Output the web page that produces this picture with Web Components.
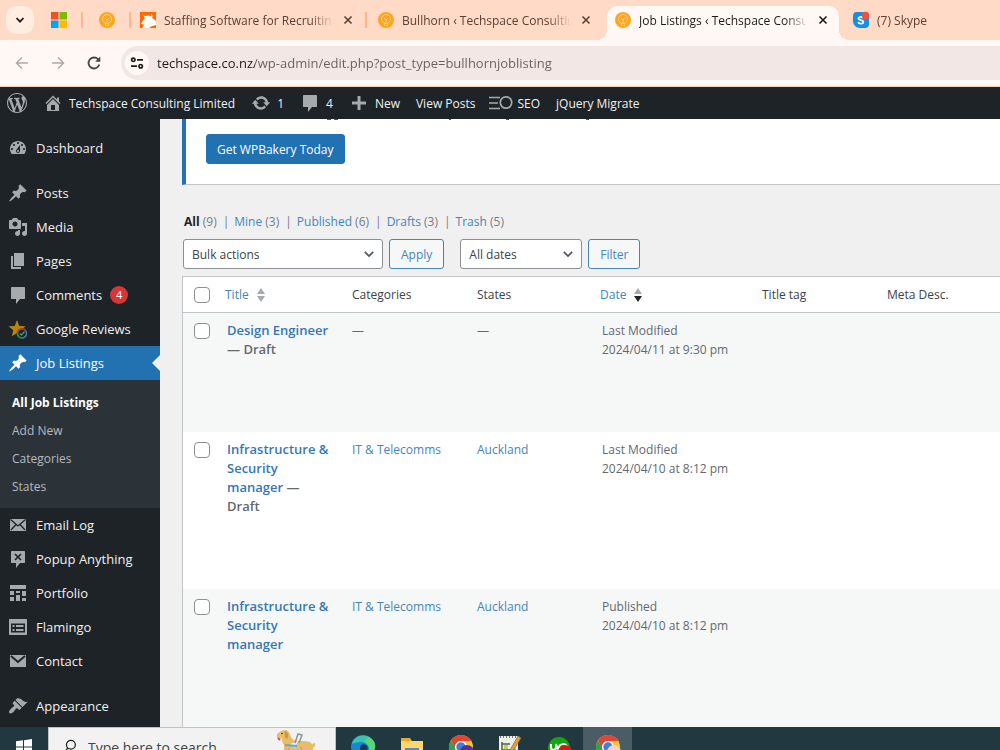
<!DOCTYPE html>
<html lang="en">
<head>
<meta charset="utf-8">
<title>Job Listings ‹ Techspace Consulting Limited</title>
<style>
    * { box-sizing: border-box; }
    body {
        margin: 0;
        height: 100vh;
        display: flex;
        flex-direction: column;
        overflow: hidden;
        background: #f0f0f1;
        font: 12px/19px "Open Sans", "Noto Sans", sans-serif;
        color: #50575e;
    }
    main { flex: 1; display: flex; min-height: 0; }
</style>
</head>
<body>
<tab-strip>
    <pinned-tab icon="microsoft"></pinned-tab>
    <pinned-tab icon="bulb"></pinned-tab>
    <browser-tab icon="bullhorn">Staffing Software for Recruiting Agencies</browser-tab>
    <browser-tab icon="bulb">Bullhorn ‹ Techspace Consulting Limited</browser-tab>
    <browser-tab icon="bulb" active>Job Listings ‹ Techspace Consulting Limited</browser-tab>
    <browser-tab icon="skype" last>(7) Skype</browser-tab>
</tab-strip>
<address-bar url="techspace.co.nz/wp-admin/edit.php?post_type=bullhornjoblisting"></address-bar>
<admin-bar>
    <admin-bar-item icon="wordpress" label="About WordPress"></admin-bar-item>
    <admin-bar-item icon="home">Techspace Consulting Limited</admin-bar-item>
    <admin-bar-item icon="update">1</admin-bar-item>
    <admin-bar-item icon="comment">4</admin-bar-item>
    <admin-bar-item icon="plus">New</admin-bar-item>
    <admin-bar-item>View Posts</admin-bar-item>
    <admin-bar-item icon="seo">SEO</admin-bar-item>
    <admin-bar-item>jQuery Migrate</admin-bar-item>
</admin-bar>
<main>
    <admin-menu>
        <menu-item icon="dashboard">Dashboard</menu-item>
        <menu-item icon="pin" separated>Posts</menu-item>
        <menu-item icon="media">Media</menu-item>
        <menu-item icon="page">Pages</menu-item>
        <menu-item icon="comment" count="4">Comments</menu-item>
        <menu-item icon="reviews">Google Reviews</menu-item>
        <menu-item icon="pin" current>Job Listings</menu-item>
        <sub-menu items="All Job Listings,Add New,Categories,States"></sub-menu>
        <menu-item icon="email">Email Log</menu-item>
        <menu-item icon="popup">Popup Anything</menu-item>
        <menu-item icon="portfolio">Portfolio</menu-item>
        <menu-item icon="flamingo">Flamingo</menu-item>
        <menu-item icon="contact">Contact</menu-item>
        <menu-item icon="brush" separated>Appearance</menu-item>
    </admin-menu>
    <admin-content>
        <admin-notice slot="notice">Get WPBakery Today</admin-notice>
        <status-links slot="filters"></status-links>
        <table-nav slot="filters"></table-nav>
        <job-table></job-table>
    </admin-content>
</main>
<task-bar></task-bar>

<script>
const ICONS = {
    wordpress: ["0 0 20 20", `<path d="M20 10c0-5.51-4.49-10-10-10C4.48 0 0 4.49 0 10c0 5.52 4.48 10 10 10 5.51 0 10-4.48 10-10zM7.78 15.37L4.37 6.22c.55-.02 1.17-.08 1.17-.08.5-.06.44-1.13-.06-1.11 0 0-1.45.11-2.37.11-.18 0-.37 0-.58-.01C4.12 2.69 6.87 1.11 10 1.11c2.33 0 4.45.87 6.05 2.34-.68-.11-1.65.39-1.65 1.58 0 .74.45 1.36.9 2.1.35.61.55 1.36.55 2.46 0 1.49-1.4 5-1.4 5l-3.03-8.37c.54-.02.82-.17.82-.17.5-.05.44-1.25-.06-1.22 0 0-1.44.12-2.38.12-.87 0-2.33-.12-2.33-.12-.5-.03-.56 1.2-.06 1.22l.92.08 1.26 3.41zM17.41 10c.24-.64.74-1.87.43-4.25.7 1.29 1.05 2.71 1.05 4.25 0 3.29-1.73 6.24-4.4 7.78.97-2.59 1.94-5.2 2.92-7.78zM6.1 18.09C3.12 16.65 1.11 13.53 1.11 10c0-1.3.23-2.48.72-3.59C3.25 10.3 4.67 14.2 6.1 18.09zm4.03-6.63l2.58 6.98c-.86.29-1.76.45-2.71.45-.79 0-1.57-.11-2.29-.33.81-2.38 1.62-4.74 2.42-7.1z"/>`],
    home: ["0 0 20 20", `<path d="M16 8.5l1.53 1.53-1.06 1.06L10 4.6l-6.47 6.49-1.06-1.06L10 2.5l4 4v-2h2v4zm-6-2.46l6 5.99V18H4v-5.97zM12 17v-5H8v5h4z"/>`],
    update: ["0 0 20 20", `<path d="M10.2 3.28c3.53 0 6.43 2.61 6.92 6h2.08l-3.5 4-3.5-4h2.32c-.45-1.97-2.21-3.45-4.32-3.45-1.45 0-2.73.71-3.54 1.78L4.95 5.66C6.23 4.2 8.11 3.28 10.2 3.28zm-.4 13.44c-3.52 0-6.43-2.61-6.92-6H.8l3.5-4c1.17 1.33 2.33 2.67 3.5 4H5.48c.45 1.97 2.21 3.45 4.32 3.45 1.45 0 2.73-.71 3.54-1.78l1.71 1.95c-1.28 1.46-3.15 2.38-5.25 2.38z"/>`],
    comment: ["0 0 20 20", `<path d="M4 2h12c.6 0 1 .4 1 1v10c0 .6-.4 1-1 1h-4l-4 5v-5H4c-.6 0-1-.4-1-1V3c0-.6.4-1 1-1z"/>`],
    plus: ["0 0 20 20", `<path d="M17 8.500v3h-5.500v5.500h-3v-5.500H3v-3h5.500V3h3v5.500z"/>`],
    seo: ["3 0 20 20", `<path d="M1 4.500h11M1 10h9M1 15.500h11" fill="none" stroke="currentColor" stroke-width="1.700"/><circle cx="18" cy="9.500" r="5.700" fill="none" stroke="currentColor" stroke-width="1.700"/>`],
    dashboard: ["0 0 20 20", `<path d="M3.760 16h12.480c1.100-1.370 1.760-3.110 1.760-5 0-4.420-3.580-8-8-8s-8 3.580-8 8c0 1.890.660 3.630 1.760 5zM10 4c.55 0 1 .45 1 1s-.45 1-1 1-1-.45-1-1 .45-1 1-1zM6 6c.55 0 1 .45 1 1s-.45 1-1 1-1-.45-1-1 .45-1 1-1zm8 0c.55 0 1 .45 1 1s-.45 1-1 1-1-.45-1-1 .45-1 1-1zm-5.370 5.550L12 7v6c0 1.100-.9 2-2 2s-2-.9-2-2c0-.57.24-1.080.63-1.450zM4 10c.55 0 1 .45 1 1s-.45 1-1 1-1-.45-1-1 .45-1 1-1zm12 0c.55 0 1 .45 1 1s-.45 1-1 1-1-.45-1-1 .45-1 1-1zm-5 3c0-.55-.45-1-1-1s-1 .45-1 1 .45 1 1 1 1-.45 1-1z"/>`],
    pin: ["0 0 20 20", `<path d="M10.44 3.02l1.82-1.82 6.36 6.35-1.83 1.82c-1.05-.68-2.48-.57-3.41.36l-.75.75c-.92.93-1.04 2.35-.35 3.41l-1.83 1.82-2.41-2.41-2.8 2.79c-.42.42-3.38 2.71-3.8 2.29s1.86-3.39 2.28-3.81l2.79-2.79L4.1 9.36l1.83-1.82c1.05.69 2.48.57 3.4-.36l.75-.75c.93-.92 1.05-2.35.36-3.41z"/>`],
    media: ["0 0 20 20", `<path d="M13 11V4c0-.55-.45-1-1-1h-1.67L9 1H5L3.67 3H2c-.55 0-1 .45-1 1v7c0 .55.45 1 1 1h10c.55 0 1-.45 1-1zM7 4.500c1.380 0 2.500 1.120 2.500 2.500S8.380 9.500 7 9.500 4.500 8.380 4.500 7 5.620 4.500 7 4.500zM14 6h5v10.500c0 1.380-1.120 2.500-2.500 2.500S14 17.880 14 16.500s1.120-2.500 2.500-2.500c.17 0 .34.02.5.05V9h-3V6zm-4 8.050V13h2v3.500c0 1.380-1.120 2.500-2.500 2.500S7 17.880 7 16.500 8.120 14 9.500 14c.17 0 .34.02.5.05z"/>`],
    page: ["0 0 20 20", `<path d="M6 15V2h10v13H6zm-1 1h8v2H3V5h2v11z"/>`],
    reviews: ["0 0 20 20", `<path d="M9 1l2.300 5.900 6.200.4-4.800 3.900 1.600 6.100L9 13.900l-5.300 3.400 1.600-6.100L.5 7.300l6.200-.4z" fill="#b8860b"/><circle cx="14" cy="14.500" r="5.300" fill="#1d2327"/><g fill="none" stroke-width="1.500"><path d="M9.700 13a4.500 4.500 0 0 1 8-1.200" stroke="#c0392b"/><path d="M17.700 11.800A4.500 4.500 0 0 1 16 18.500" stroke="#3b78c9"/><path d="M16 18.500a4.500 4.500 0 0 1-6.300-5.500" stroke="#2e8b57"/><path d="M12 14.500l1.500 1.500 3-3.500" stroke="#3b9c5a"/></g>`],
    email: ["0 0 20 20", `<path d="M2 4h16v12H2z"/><path d="M2.500 4.500L10 11l7.500-6.500M3 15l5-5.500M17 15l-5-5.500" fill="none" stroke="#1d2327" stroke-width="1.300"/>`],
    popup: ["0 0 20 20", `<path d="M4 2h12c.6 0 1 .4 1 1v10c0 .6-.4 1-1 1h-4l-4 5v-5H4c-.6 0-1-.4-1-1V3c0-.6.4-1 1-1z"/><path d="M7 5l6 6M13 5l-6 6" fill="none" stroke="#1d2327" stroke-width="1.700"/>`],
    portfolio: ["0 0 20 20", `<path d="M2 2h16v4H2zM2 8h4v4H2zM8 8h4v2H8zM14 8h4v5h-4zM2 14h4v4H2zM8 12h4v6H8zM14 15h4v3h-4z"/>`],
    flamingo: ["0 0 20 20", `<path d="M1 3c0-.6.4-1 1-1h16c.6 0 1 .4 1 1v14c0 .6-.4 1-1 1H2c-.6 0-1-.4-1-1z"/><path d="M3 6.500h14v9H3z" fill="#1d2327"/><path d="M4.500 8h2v2h-2zM8 8h7.500v2H8zM4.500 12h2v2h-2zM8 12h7.500v2H8z"/>`],
    contact: ["0 0 20 20", `<path d="M2 4h16v12H2z"/><path d="M3 5l7 6 7-6" fill="none" stroke="#1d2327" stroke-width="2"/>`],
    brush: ["0 0 20 20", `<path d="M14.48 11.06L7.41 3.99l1.5-1.5c.5-.56 2.3-.47 3.51.32 1.21.8 1.43 1.28 2.91 2.1 1.18.64 2.45 1.26 4.45.85zm-.71.71L6.7 4.7 4.93 6.47c-.39.39-.39 1.02 0 1.41l1.06 1.06c.39.39.39 1.03 0 1.42-.6.6-1.43 1.11-2.21 1.69-.35.26-.7.53-1.01.84C1.43 14.23.4 16.08 1.4 17.07c.99 1 2.84-.03 4.18-1.36.31-.31.58-.66.85-1.02.57-.78 1.08-1.61 1.69-2.21.39-.39 1.02-.39 1.41 0l1.06 1.06c.39.39 1.02.39 1.41 0z"/>`],
    microsoft: ["0 0 16 16", `<path fill="#f25022" d="M0 0h7.500v7.500H0z"/><path fill="#7fba00" d="M8.500 0H16v7.500H8.500z"/><path fill="#00a4ef" d="M0 8.500h7.500V16H0z"/><path fill="#ffb900" d="M8.500 8.500H16V16H8.500z"/>`],
    bulb: ["0 0 16 16", `<circle cx="8" cy="8" r="8" fill="#ffa51f"/><g fill="none" stroke="#ffd999" stroke-width=".8"><circle cx="8" cy="7" r="4.500"/><path d="M6.500 11v2.500h3V11M8 7v4M6 6l2 2 2-2"/></g>`],
    bullhorn: ["0 0 16 16", `<path fill="#ff6a00" d="M0 0h16v16H0z"/><path fill="#fff" d="M3.500 2.500c.5 1 1.500 1.500 3 1.500C8 3.200 10 3.500 11 4.500c.5-.8.6-1.800.3-2.700C13 3 13 5 12 6.200c2 .5 3.300 2 4 3.300V13l-4.500 1.200L9 16H2.500c.3-1.500 1-2.700 2-3.500-1.300.3-2.700 0-3.500-1L3.500 8 5 5.800C3.700 5 3.200 3.800 3.500 2.500z"/>`],
    skype: ["0 0 16 16", `<path d="M0 4a4 4 0 0 1 4-4h5c4 0 7 3 7 7v5a4 4 0 0 1-4 4H7c-4 0-7-3-7-7z" fill="#1391e0"/><path d="M10 6C9 4.500 5.300 4.600 5.500 6.600c.2 2 4.900 1 4.900 3.300 0 2.200-4.200 2.300-5.300.4" fill="none" stroke="#fff" stroke-width="1.700"/><circle cx="12.500" cy="3.500" r="3.700" fill="#fb4a3c"/>`],
    close: ["0 0 10 10", `<path d="M1.500 1.500l7 7M8.500 1.500l-7 7" fill="none" stroke="currentColor" stroke-width="1.600"/>`],
    chevron: ["0 0 10 10", `<path d="M1.500 3L5 6.700 8.500 3" fill="none" stroke="currentColor" stroke-width="1.800"/>`],
    back: ["0 0 14 14", `<path d="M13 7H2M7 1.500L1.500 7 7 12.500" fill="none" stroke="currentColor" stroke-width="1.500"/>`],
    forward: ["0 0 14 14", `<path d="M1 7h11M7 1.500L12.500 7 7 12.500" fill="none" stroke="currentColor" stroke-width="1.500"/>`],
    reload: ["0 0 14 14", `<path d="M12.300 8.500A5.500 5.500 0 1 1 11 3.200l1.500 1.600" fill="none" stroke="currentColor" stroke-width="1.800"/><path d="M13.300.5v5.200H8.200z"/>`],
    tune: ["0 0 14 14", `<g fill="none" stroke="currentColor" stroke-width="1.700"><circle cx="3.300" cy="3.800" r="1.700"/><path d="M7 3.800h6M1 10.200h6"/><circle cx="10.700" cy="10.200" r="1.700"/></g>`],
    search: ["0 0 16 18", `<circle cx="9" cy="6.500" r="5" fill="none" stroke="currentColor" stroke-width="1.400"/><path d="M5.500 10L1.500 15.500" stroke="currentColor" stroke-width="1.400"/>`],
    windows: ["0 0 16 16", `<path d="M0 2.300L7 1.300V7.500H0zM8 1.200L16 0v7.500H8zM0 8.500h7v6.200l-7-1zM8 8.500h8V16l-8-1.200z"/>`],
    dog: ["0 0 42 24", `<path fill="#e9bd68" d="M2 5c2-1 4-4 8-4 4 .3 5 4 6 7 2 4 7 4 12 4 5 0 8 1 9 3l3-1c1 2 0 4-2 5v5H9v-8c-2-2-2-5-2-7-2 1-4 1-5 0z"/><path d="M26 18v6M14 19v5" stroke="#cc964a"/><path d="M10 2c3 0 4 6 2 8-2-1-3-4-2-8z" fill="#cc964a"/><circle cx="7" cy="4.500" r=".8" fill="#333"/><path d="M3 9l2 2" stroke="#d9534f" stroke-width="2"/><path d="M15 15l8-3-3 7z" fill="#e8f0f5"/><path d="M10 16l12 1" stroke="#5aa9dd" stroke-width="2"/><path d="M20 14l3-9 4 1-3 8" fill="none" stroke="#8c939e" stroke-width="1.500"/>`],
    edge: ["0 0 24 24", `<circle cx="12" cy="12" r="12" fill="#1687d4"/><path d="M1 9C3-2 21-3 24 10c1 5-3 8-7 7 3-5-1-10-7-10-4 0-7 1-9 2z" fill="#36c3b2"/><path d="M17 2c6 2 8 7 7 11-1 3-4 5-7 4 3-5-1-8-4-10z" fill="#5bd676"/><path d="M9 13c0-3 3-5 6-3 2 1 2 4 1 6l8 2c-4 7-15 4-15-5z" fill="#153c62"/>`],
    folder: ["0 0 24 24", `<path d="M1 3h9l2 3h11v15H1z" fill="#e8a92c"/><path d="M1 6h22v16H1z" fill="#ffd76b"/><path d="M5 13h14v9H5z" fill="#4593cc"/>`],
    chrome: ["0 0 24 24", `<circle cx="12" cy="12" r="12" fill="#f7c52d"/><path d="M2 5.500C7-2 18-1.500 22.500 6H12a6 6 0 0 0-5.500 8z" fill="#e34436"/><path d="M2 5.500A12 12 0 0 0 12 24l4-8H8z" fill="#2ca352"/><circle cx="12" cy="12" r="6" fill="#fff"/><circle cx="12" cy="12" r="4.700" fill="#3c7fe0"/>`],
    notes: ["0 0 24 24", `<path d="M1 1h19v22H1z" fill="#eef0e8"/><path d="M2 2h17" stroke="#777" stroke-width="2" stroke-dasharray="1 2"/><path d="M4 7v15M4 9h8M4 15h14" fill="none" stroke="#555b50" stroke-width="1.500"/><path d="M5 17h14v6H5zM6 10h4v4H6z" fill="#b9d83e"/><path d="M20 1l3 2-9 15-3 1 1-4z" fill="#dfa03b" stroke="#8a6a3e" stroke-width=".7"/>`],
    upwork: ["0 0 24 24", `<circle cx="12" cy="13" r="11" fill="#12a70b"/><path d="M4 9v3c0 4 5 4 5 0V9c1 5 4 8 6 8M12 16V13c0-5 8-5 8-1 0 3-5 4-7 1" fill="none" stroke="#fff" stroke-width="2"/>`]
};

class UiIcon extends HTMLElement {
    constructor() {
        super();
        this.attachShadow({ mode: "open" });
    }

    connectedCallback() {
        const [viewBox, shapes] = ICONS[this.getAttribute("name")];
        this.shadowRoot.innerHTML = `
            <style>
                :host { display: block; flex: none; width: var(--icon-size, 16px); height: var(--icon-size, 16px); }
                svg { display: block; width: 100%; height: 100%; overflow: visible; fill: currentColor; }
            </style>
            <svg viewBox="${viewBox}" aria-hidden="true">${shapes}</svg>
        `;
    }
}

class TabStrip extends HTMLElement {
    constructor() {
        super();
        this.attachShadow({ mode: "open" });
        this.shadowRoot.innerHTML = `
            <style>
                :host {
                    display: flex;
                    flex: none;
                    align-items: flex-end;
                    height: 40px;
                    background: #ffdac6;
                    overflow: hidden;
                }
                button {
                    flex: none;
                    width: 28px;
                    height: 28px;
                    margin: 0 1px 6px 6px;
                    padding: 9px;
                    border: 0;
                    border-radius: 10px;
                    background: #ffede2;
                    color: #1f1a18;
                    --icon-size: 10px;
                }
            </style>
            <button aria-label="Search tabs"><ui-icon name="chevron"></ui-icon></button>
            <slot></slot>
        `;
    }
}

class PinnedTab extends HTMLElement {
    constructor() {
        super();
        this.attachShadow({ mode: "open" });
    }

    connectedCallback() {
        this.shadowRoot.innerHTML = `
            <style>
                :host {
                    display: flex;
                    flex: none;
                    align-items: center;
                    justify-content: flex-end;
                    gap: 14px;
                    width: 48px;
                    height: 40px;
                }
                span { width: 2px; height: 16px; border-radius: 1px; background: #ffb68a; }
            </style>
            <ui-icon name="${this.getAttribute("icon")}"></ui-icon><span></span>
        `;
    }
}

class BrowserTab extends HTMLElement {
    constructor() {
        super();
        this.attachShadow({ mode: "open" });
    }

    connectedCallback() {
        const last = this.hasAttribute("last");
        this.shadowRoot.innerHTML = `
            <style>
                :host {
                    position: relative;
                    display: flex;
                    flex: none;
                    align-items: center;
                    gap: 8px;
                    box-sizing: border-box;
                    width: 238px;
                    height: 40px;
                    padding: 0 0 0 9px;
                    color: #5c4034;
                }
                :host([active]) {
                    width: 232px;
                    height: 34px;
                    padding: 0 0 6px 8px;
                    border-radius: 10px 10px 0 0;
                    background: #fff8f5;
                    color: #1f1a18;
                }
                :host([last]) { padding-left: 14px; }
                /* outward curves at the foot of the active tab */
                :host([active])::before, :host([active])::after {
                    content: "";
                    position: absolute;
                    bottom: 0;
                    width: 10px;
                    height: 10px;
                }
                :host([active])::before { left: -10px; background: radial-gradient(circle at 0 0, transparent 10px, #fff8f5 10px); }
                :host([active])::after { right: -10px; background: radial-gradient(circle at 100% 0, transparent 10px, #fff8f5 10px); }
                .title {
                    width: 167px;
                    overflow: hidden;
                    white-space: nowrap;
                    -webkit-mask-image: linear-gradient(to right, #000 146px, transparent 170px);
                    mask-image: linear-gradient(to right, #000 146px, transparent 170px);
                }
                button { margin-left: 4px; padding: 0; border: 0; background: none; color: inherit; --icon-size: 10px; }
                .divider { width: 2px; height: 16px; margin-left: 4px; background: #ffb68a; }
            </style>
            <ui-icon name="${this.getAttribute("icon")}"></ui-icon>
            <div class="title"><slot></slot></div>
            ${last ? "" : `<button aria-label="Close tab"><ui-icon name="close"></ui-icon></button>`}
            ${this.hasAttribute("active") || this.nextElementSibling?.hasAttribute("active") || last ? "" : `<span class="divider"></span>`}
        `;
    }
}

class AddressBar extends HTMLElement {
    constructor() {
        super();
        this.attachShadow({ mode: "open" });
        this.shadowRoot.innerHTML = `
            <style>
                :host {
                    display: flex;
                    flex: none;
                    align-items: center;
                    box-sizing: border-box;
                    height: 47px;
                    padding-left: 15px;
                    border-bottom: 1px solid #f3cdb5;
                    background: #fff8f5;
                    color: #51433c;
                    --icon-size: 14px;
                }
                button { padding: 0; border: 0; background: none; color: inherit; margin-right: 22px; }
                button:disabled { color: #b3a8a3; }
                button:nth-of-type(3) { margin-right: 20px; }
                form {
                    flex: 1;
                    display: flex;
                    align-items: center;
                    gap: 8px;
                    height: 34px;
                    padding-left: 4px;
                    border-radius: 17px 0 0 17px;
                    background: #f2e7e4;
                }
                form button {
                    width: 24px;
                    height: 24px;
                    padding: 5px;
                    margin: 0;
                    border-radius: 50%;
                    background: #fff8f5;
                    color: #1f1a18;
                }
                input {
                    flex: 1;
                    border: 0;
                    padding: 0;
                    outline: 0;
                    font: inherit;
                    font-size: 13px;
                    color: #6b5f5a;
                    background: linear-gradient(to right, #1f1a18 98px, #6b5f5a 98px);
                    -webkit-background-clip: text;
                    background-clip: text;
                    -webkit-text-fill-color: transparent;
                }
            </style>
            <button aria-label="Back" disabled><ui-icon name="back"></ui-icon></button>
            <button aria-label="Forward" disabled><ui-icon name="forward"></ui-icon></button>
            <button aria-label="Reload"><ui-icon name="reload"></ui-icon></button>
            <form>
                <button type="button" aria-label="Site information"><ui-icon name="tune"></ui-icon></button>
                <input aria-label="Address" spellcheck="false" value="${this.getAttribute("url")}">
            </form>
        `;
    }
}

class AdminBar extends HTMLElement {
    constructor() {
        super();
        this.attachShadow({ mode: "open" });
        this.shadowRoot.innerHTML = `
            <style>
                :host {
                    display: flex;
                    flex: none;
                    align-items: center;
                    gap: 16px;
                    height: 32px;
                    padding-left: 7px;
                    background: #1d2327;
                    color: #f0f0f1;
                }
            </style>
            <slot></slot>
        `;
    }
}

class AdminBarItem extends HTMLElement {
    constructor() {
        super();
        this.attachShadow({ mode: "open" });
        const icon = this.getAttribute("icon");
        const label = this.getAttribute("label");
        this.shadowRoot.innerHTML = `
            <style>
                :host { display: block; --icon-size: 20px; }
                a { display: flex; align-items: center; gap: 6px; color: inherit; text-decoration: none; white-space: nowrap; }
                ui-icon { color: #a7aaad; }
            </style>
            <a href="#" ${label ? `aria-label="${label}"` : ""}>${icon ? `<ui-icon name="${icon}"></ui-icon>` : ""}<slot></slot></a>
        `;
    }
}

class AdminMenu extends HTMLElement {
    constructor() {
        super();
        this.attachShadow({ mode: "open" });
        this.shadowRoot.innerHTML = `
            <style>
                :host {
                    display: block;
                    flex: none;
                    box-sizing: border-box;
                    width: 160px;
                    padding-top: 12px;
                    overflow: hidden;
                    background: #1d2327;
                    color: #f0f0f1;
                    font-size: 13px;
                }
            </style>
            <nav><slot></slot></nav>
        `;
    }
}

class MenuItem extends HTMLElement {
    constructor() {
        super();
        this.attachShadow({ mode: "open" });
        const count = this.getAttribute("count");
        this.shadowRoot.innerHTML = `
            <style>
                :host { display: block; --icon-size: 20px; }
                :host([separated]) { margin-top: 11px; }
                a {
                    position: relative;
                    display: flex;
                    align-items: center;
                    gap: 8px;
                    height: 34px;
                    padding-left: 8px;
                    color: inherit;
                    text-decoration: none;
                    white-space: nowrap;
                }
                ui-icon { color: #a7aaad; }
                :host([current]) a { background: #2271b1; color: #fff; }
                :host([current]) ui-icon { color: #fff; }
                :host([current]) a::after {
                    content: "";
                    position: absolute;
                    right: 0;
                    border: 8px solid transparent;
                    border-right-color: #f0f0f1;
                    border-left: 0;
                }
                .count {
                    width: 18px;
                    height: 18px;
                    border-radius: 9px;
                    background: #d63638;
                    color: #fff;
                    font-size: 11px;
                    line-height: 18px;
                    text-align: center;
                }
            </style>
            <a href="#"><ui-icon name="${this.getAttribute("icon")}"></ui-icon><slot></slot>${count ? `<span class="count">${count}</span>` : ""}</a>
        `;
    }
}

class SubMenu extends HTMLElement {
    constructor() {
        super();
        this.attachShadow({ mode: "open" });
        const items = this.getAttribute("items").split(",");
        this.shadowRoot.innerHTML = `
            <style>
                :host { display: block; padding: 9px 0 7px; background: #2c3338; font-size: 12px; }
                a { display: block; padding-left: 12px; line-height: 28px; color: #b4b9be; text-decoration: none; }
                a:first-of-type { color: #fff; font-weight: 700; }
            </style>
            ${items.map((item) => `<a href="#">${item}</a>`).join("")}
        `;
    }
}

class AdminContent extends HTMLElement {
    constructor() {
        super();
        this.attachShadow({ mode: "open" });
        this.shadowRoot.innerHTML = `
            <style>
                :host { display: block; flex: 1; min-width: 0; padding-left: 22px; overflow: hidden; }
                .filters { padding: 27px 0 7px 1px; display: flex; flex-direction: column; gap: 8px; }
            </style>
            <slot name="notice"></slot>
            <div class="filters"><slot name="filters"></slot></div>
            <slot></slot>
        `;
    }
}

class AdminNotice extends HTMLElement {
    constructor() {
        super();
        this.attachShadow({ mode: "open" });
        this.shadowRoot.innerHTML = `
            <style>
                :host {
                    display: block;
                    padding-bottom: 20px;
                    border-left: 4px solid #2271b1;
                    border-bottom: 1px solid #c3c4c7;
                    background: #fff;
                }
                /* tails of the paragraph that is scrolled under the admin bar */
                svg { display: block; height: 15px; fill: none; stroke: #50575e; }
                button {
                    height: 30px;
                    margin-left: 20px;
                    padding: 0 10px;
                    border: 1px solid #2271b1;
                    border-radius: 3px;
                    background: #2271b1;
                    color: #fff;
                    font: inherit;
                }
            </style>
            <svg width="420" height="15" aria-hidden="true"><path d="M141 0.500h4M148 0.500h4M263 0.500h2M320 0.500h3M400 0.500h3"/></svg>
            <button><slot></slot></button>
        `;
    }
}

class StatusLinks extends HTMLElement {
    constructor() {
        super();
        this.attachShadow({ mode: "open" });
        const links = [["Mine", 3], ["Published", 6], ["Drafts", 3], ["Trash", 5]];
        this.shadowRoot.innerHTML = `
            <style>
                :host { display: block; padding-left: 1px; color: #787c82; }
                ul { display: flex; gap: 6px; margin: 0; padding: 0; list-style: none; white-space: nowrap; }
                li + li::before { content: "|"; margin-right: 5px; }
                a { color: #4585be; text-decoration: none; }
                .current { color: #1d2327; font-weight: 700; }
            </style>
            <ul>
                <li><a class="current" href="#">All</a> (9)</li>
                ${links.map(([name, count]) => `<li><a href="#">${name}</a> (${count})</li>`).join("")}
            </ul>
        `;
    }
}

class TableNav extends HTMLElement {
    constructor() {
        super();
        this.attachShadow({ mode: "open" });
        this.shadowRoot.innerHTML = `
            <style>
                :host { display: flex; gap: 6px; }
                select, button { height: 30px; border-radius: 3px; font: inherit; }
                select {
                    width: 200px;
                    padding: 0 24px 0 8px;
                    appearance: none;
                    border: 1px solid #8c8f94;
                    color: #3c434a;
                    background: #fff url("data:image/svg+xml,%3Csvg xmlns='http://www.w3.org/2000/svg' viewBox='0 0 20 20'%3E%3Cpath d='M4 7l6 6 6-6' fill='none' stroke='%2350575e' stroke-width='2.500'/%3E%3C/svg%3E") no-repeat right 6px center / 14px;
                }
                .dates { width: 122px; margin-left: 10px; }
                button { padding: 0 11px; border: 1px solid #4585be; background: #f6f7f7; color: #4585be; }
            </style>
            <select aria-label="Select bulk action"><option>Bulk actions</option></select>
            <button>Apply</button>
            <select class="dates" aria-label="Filter by date"><option>All dates</option></select>
            <button>Filter</button>
        `;
    }
}

class SortArrows extends HTMLElement {
    constructor() {
        super();
        this.attachShadow({ mode: "open" });
        this.shadowRoot.innerHTML = `
            <style>
                :host { display: block; color: #a7aaad; }
                :host([descending]) .down { color: #1d2327; }
                svg { display: block; fill: currentColor; }
            </style>
            <svg width="8" height="14" viewBox="0 0 8 14" aria-hidden="true"><path d="M4 0l4 6H0z"/><path class="down" fill="currentColor" d="M0 8h8l-4 6z"/></svg>
        `;
    }
}

class JobTable extends HTMLElement {
    _rows = [
        { title: "Design Engineer", draft: true, status: "Last Modified", date: "2024/04/11 at 9:30 pm", size: "short" },
        { title: "Infrastructure &amp; Security manager", draft: true, category: "IT &amp; Telecomms", state: "Auckland", status: "Last Modified", date: "2024/04/10 at 8:12 pm" },
        { title: "Infrastructure &amp; Security manager", category: "IT &amp; Telecomms", state: "Auckland", status: "Published", date: "2024/04/10 at 8:12 pm" }
    ];

    constructor() {
        super();
        this.attachShadow({ mode: "open" });
        this._render();
    }

    _row(row, index) {
        const term = (name) => (name ? `<a href="#">${name}</a>` : "—");
        return `
            <tr class="${row.size || ""}">
                <td><input type="checkbox" aria-label="Select ${row.title} (${index + 1})"></td>
                <td class="name"><a href="#">${row.title}</a>${row.draft ? " — Draft" : ""}</td>
                <td>${term(row.category)}</td>
                <td>${term(row.state)}</td>
                <td>${row.status}<br>${row.date}</td>
                <td></td>
                <td></td>
            </tr>
        `;
    }

    _render() {
        this.shadowRoot.innerHTML = `
            <style>
                :host { display: block; border: 1px solid #c3c4c7; border-right: 0; background: #fff; color: #646970; }
                table { width: 100%; border-collapse: collapse; table-layout: fixed; }
                th { height: 35px; padding: 0 10px; border-bottom: 1px solid #c3c4c7; color: #3c434a; font-weight: 400; text-align: left; white-space: nowrap; }
                td { height: 139px; padding: 8px 10px 10px; vertical-align: top; }
                .short td { height: 101px; }
                tbody tr:nth-child(odd) { background: #f6f7f7; }
                th.sortable { padding-left: 8px; }
                th.sortable a { display: flex; align-items: center; gap: 8px; }
                a { color: #4585be; text-decoration: none; }
                .name { font-size: 13px; font-weight: 600; }
                .name a { color: #3577b5; }
                th:first-child, td:first-child { padding-left: 11px; padding-right: 0; }
                input {
                    display: block;
                    appearance: none;
                    width: 16px;
                    height: 16px;
                    margin: 2px 0;
                    border: 1px solid #8c8f94;
                    border-radius: 4px;
                    background: #fff;
                }
                .check { width: 34px; }
                .term { width: 125px; }
                .date { width: 160px; }
            </style>
            <table>
                <colgroup>
                    <col class="check"><col class="term"><col class="term"><col class="term"><col class="date"><col class="term"><col>
                </colgroup>
                <thead>
                    <tr>
                        <th><input type="checkbox" aria-label="Select all"></th>
                        <th class="sortable"><a href="#">Title <sort-arrows></sort-arrows></a></th>
                        <th>Categories</th>
                        <th>States</th>
                        <th class="sortable"><a href="#">Date <sort-arrows descending></sort-arrows></a></th>
                        <th>Title tag</th>
                        <th>Meta Desc.</th>
                    </tr>
                </thead>
                <tbody>${this._rows.map((row, index) => this._row(row, index)).join("")}</tbody>
            </table>
        `;
    }
}

class TaskBar extends HTMLElement {
    constructor() {
        super();
        this.attachShadow({ mode: "open" });
        const apps = ["edge", "folder", "chrome", "notes", "upwork", "chrome"];
        this.shadowRoot.innerHTML = `
            <style>
                :host { display: block; flex: none; height: 23px; overflow: hidden; background: #223840; }
                .bar { display: flex; height: 40px; }
                button {
                    display: flex;
                    align-items: center;
                    justify-content: center;
                    width: 49px;
                    padding: 0;
                    border: 0;
                    background: none;
                    color: #fff;
                    --icon-size: 24px;
                }
                .start { width: 48px; --icon-size: 16px; }
                .active { background: #4b5d64; }
                form {
                    display: flex;
                    align-items: center;
                    gap: 10px;
                    box-sizing: border-box;
                    width: 288px;
                    margin-right: 2px;
                    padding: 0 18px 0 13px;
                    border: 1px solid #bfc1c2;
                    background: #f2f2f2;
                    color: #222;
                }
                input { flex: 1; min-width: 0; padding: 0; border: 0; background: none; font: inherit; font-size: 14px; }
                input::placeholder { color: #444; opacity: 1; }
                .dog { width: 42px; height: 24px; margin-bottom: 12px; }
                .badged { position: relative; }
                .badged::after {
                    content: "";
                    position: absolute;
                    top: 18px;
                    left: 24px;
                    width: 14px;
                    height: 14px;
                    border-radius: 7px;
                    background: #5030a5;
                }
                .upwork::after { background: #d9151c; }
                .active::after { background: #f6d5c5; }
            </style>
            <div class="bar">
                <button class="start" aria-label="Start"><ui-icon name="windows"></ui-icon></button>
                <form>
                    <ui-icon name="search"></ui-icon>
                    <input aria-label="Search" placeholder="Type here to search">
                    <ui-icon class="dog" name="dog"></ui-icon>
                </form>
                ${apps.map((app, i) => `<button aria-label="${app}" class="${["chrome", "upwork"].includes(app) ? "badged" : ""} ${app} ${i === 5 ? "active" : ""}"><ui-icon name="${app}"></ui-icon></button>`).join("")}
            </div>
        `;
    }
}

customElements.define("ui-icon", UiIcon);
customElements.define("tab-strip", TabStrip);
customElements.define("pinned-tab", PinnedTab);
customElements.define("browser-tab", BrowserTab);
customElements.define("address-bar", AddressBar);
customElements.define("admin-bar", AdminBar);
customElements.define("admin-bar-item", AdminBarItem);
customElements.define("admin-menu", AdminMenu);
customElements.define("menu-item", MenuItem);
customElements.define("sub-menu", SubMenu);
customElements.define("admin-content", AdminContent);
customElements.define("admin-notice", AdminNotice);
customElements.define("status-links", StatusLinks);
customElements.define("table-nav", TableNav);
customElements.define("sort-arrows", SortArrows);
customElements.define("job-table", JobTable);
customElements.define("task-bar", TaskBar);
</script>
</body>
</html>
